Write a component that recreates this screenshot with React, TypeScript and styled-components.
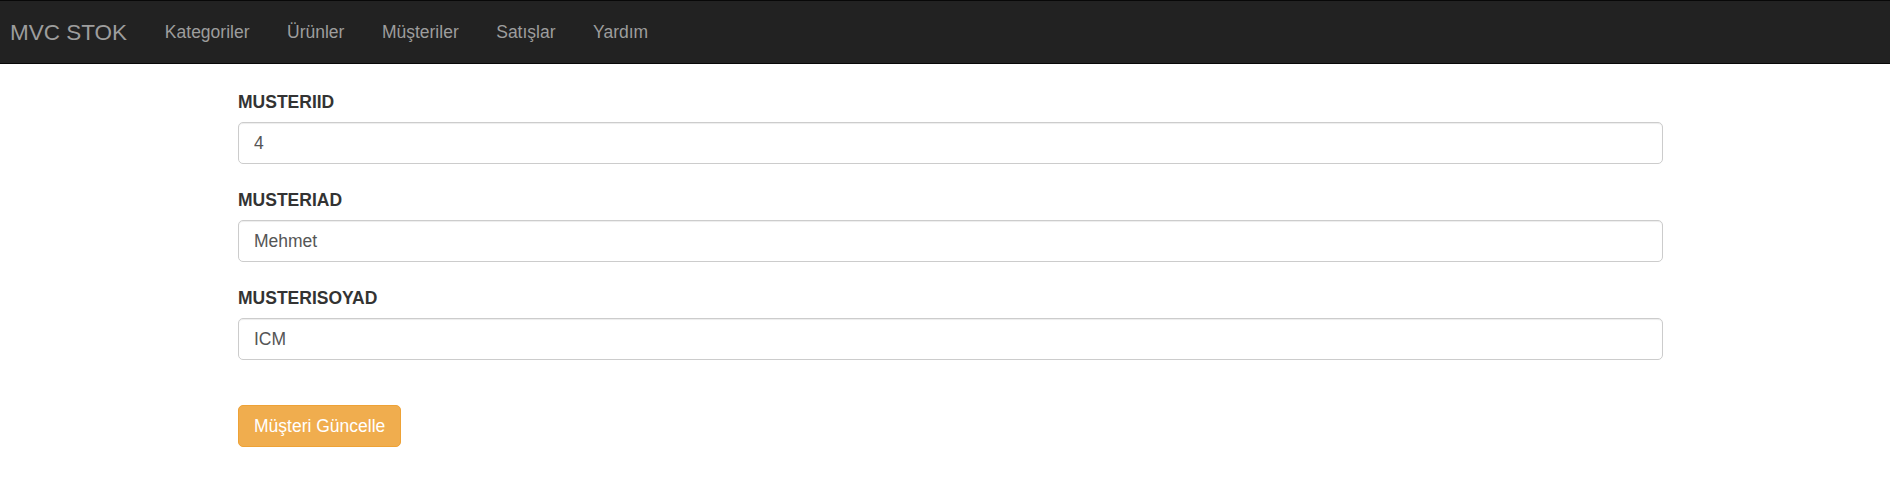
import styled, { createGlobalStyle } from "styled-components";

const GlobalStyle = createGlobalStyle`
  html, body {
    margin: 0;
    padding: 0;
    background: #fff;
    font-family: "Liberation Sans", Arial, Helvetica, sans-serif;
    font-size: 17.5px;
    line-height: 25px;
    color: #333;
  }
  * {
    box-sizing: border-box;
  }
`;

const Navbar = styled.nav`
  height: 64px;
  background: #222;
  border-top: 1px solid #080808;
  border-bottom: 1px solid #080808;
  display: flex;
  align-items: center;
  padding-left: 10px;
`;

const Brand = styled.a`
  color: #9d9d9d;
  font-size: 22.5px;
  line-height: 25px;
  padding-right: 19px;
  text-decoration: none;
`;

const NavList = styled.ul`
  display: flex;
  list-style: none;
  margin: 0;
  padding: 0;
`;

const NavLink = styled.a`
  display: block;
  color: #9d9d9d;
  font-size: 17.5px;
  line-height: 25px;
  padding: 0 18.75px;
  text-decoration: none;
`;

const Container = styled.div`
  width: 1425px;
  margin: 26px 0 0 238px;
`;

const FormGroup = styled.div`
  margin-bottom: 24px;
`;

const Label = styled.label`
  display: block;
  font-weight: bold;
  font-size: 17.5px;
  line-height: 25px;
  color: #333;
  margin-bottom: 7px;
`;

const Input = styled.input`
  display: block;
  width: 100%;
  height: 42px;
  padding: 7px 15px;
  font-family: "Liberation Sans", Arial, sans-serif;
  font-size: 17.5px;
  color: #555;
  background: #fff;
  border: 1px solid #ccc;
  border-radius: 5px;
  box-shadow: inset 0 1px 1px rgba(0, 0, 0, 0.075);
  outline: none;
`;

const Button = styled.button`
  margin-top: 21px;
  height: 42px;
  padding: 0 15px;
  font-family: "Liberation Sans", Arial, sans-serif;
  font-size: 17.5px;
  color: #fff;
  background: #f0ad4e;
  border: 1px solid #eea236;
  border-radius: 5px;
  cursor: pointer;
`;

const links = ["Kategoriler", "Ürünler", "Müşteriler", "Satışlar", "Yardım"];

const fields = [
  { label: "MUSTERIID", value: "4" },
  { label: "MUSTERIAD", value: "Mehmet" },
  { label: "MUSTERISOYAD", value: "ICM" },
];

export default function App() {
  return (
    <>
      <GlobalStyle />
      <Navbar>
        <Brand href="#">MVC STOK</Brand>
        <NavList>
          {links.map((l) => (
            <li key={l}>
              <NavLink href="#">{l}</NavLink>
            </li>
          ))}
        </NavList>
      </Navbar>
      <Container>
        <form onSubmit={(e) => e.preventDefault()}>
          {fields.map((f) => (
            <FormGroup key={f.label}>
              <Label>{f.label}</Label>
              <Input defaultValue={f.value} />
            </FormGroup>
          ))}
          <Button type="submit">Müşteri Güncelle</Button>
        </form>
      </Container>
    </>
  );
}
